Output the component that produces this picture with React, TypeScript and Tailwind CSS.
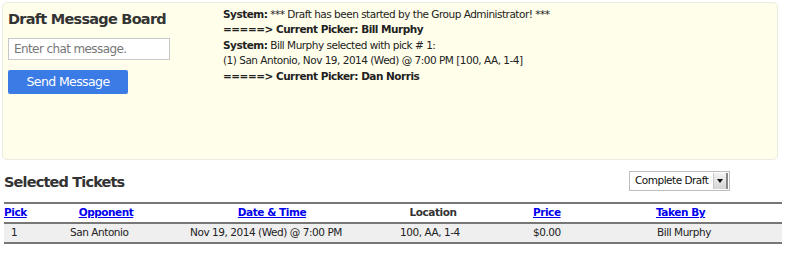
import React from "react";

const font = { fontFamily: '"DejaVu Sans", Verdana, sans-serif' };

export default function App() {
  return (
    <div className="w-[786px] h-[258px] bg-white text-[#222] overflow-hidden" style={font}>
      <div className="pt-[2px] pl-[2px]">
        <div className="w-[776px] h-[158px] bg-[#fffeea] border border-[#ebebdf] rounded-[5px] flex">
          <div className="w-[220px] pl-[5px] pt-[6px] flex flex-col">
            <div className="text-[14.5px] font-bold text-[#333] leading-[20px] tracking-[-0.75px]">Draft Message Board</div>
            <div className="mt-[9px] w-[162px] h-[22px] border border-[#c8c8c8] bg-white flex items-center pl-[5px] text-[12px] text-[#777] tracking-[-0.6px]">
              Enter chat message.
            </div>
            <div className="mt-[10px] w-[120px] h-[24px] bg-[#3b7be5] rounded-[2px] flex items-center justify-center text-white text-[12.5px] tracking-[-0.6px]">
              Send Message
            </div>
          </div>
          <div className="pt-[4px] text-[10.5px] leading-[15.4px] text-[#222] tracking-[-0.5px]">
            <div><b>System:</b> *** Draft has been started by the Group Administrator! ***</div>
            <div className="font-bold">=====&gt; Current Picker: Bill Murphy</div>
            <div><b>System:</b> Bill Murphy selected with pick # 1:</div>
            <div>(1) San Antonio, Nov 19, 2014 (Wed) @ 7:00 PM [100, AA, 1-4]</div>
            <div className="font-bold">=====&gt; Current Picker: Dan Norris</div>
          </div>
        </div>
      </div>
      <div className="flex items-center h-[42px] pl-[4px]">
        <div className="text-[14.5px] font-bold text-[#333] tracking-[-0.85px] mt-[4px]">Selected Tickets</div>
        <div className="ml-auto mr-[56px] w-[101px] h-[20px] border border-[#bdbdbd] bg-white flex items-center text-[10.5px] text-[#111] whitespace-nowrap">
          <span className="pl-[5px] flex-1 tracking-[-0.5px]">Complete Draft</span>
          <div className="w-[15px] h-[16px] mr-[1px] bg-gradient-to-b from-[#f4f4f4] to-[#d4d4d4] border-l border-[#c8c8c8] border-r-2 border-r-[#888] flex items-center justify-center">
            <div className="w-0 h-0 border-l-[3px] border-r-[3px] border-t-[4px] border-l-transparent border-r-transparent border-t-[#111]" />
          </div>
        </div>
      </div>
      <div className="ml-[4px] w-[778px] text-[10.5px] tracking-[-0.45px]">
        <div className="border-t-2 border-[#777] border-b-2 flex h-[22px] items-center font-bold">
          <div className="w-[36px] text-[#0000ee] underline">Pick</div>
          <div className="w-[132px] text-center text-[#0000ee] underline">Opponent</div>
          <div className="w-[200px] text-center text-[#0000ee] underline">Date &amp; Time</div>
          <div className="w-[122px] text-center text-[#333]">Location</div>
          <div className="w-[126px] pl-[39px] text-[#0000ee] underline">Price</div>
          <div className="flex-1 pl-[36px] text-[#0000ee] underline">Taken By</div>
        </div>
        <div className="flex h-[20px] items-center bg-[#efefef] border-b-2 border-[#777] text-[#222]">
          <div className="w-[36px] pl-[7px]">1</div>
          <div className="w-[132px] pl-[30px]">San Antonio</div>
          <div className="w-[200px] pl-[18px]">Nov 19, 2014 (Wed) @ 7:00 PM</div>
          <div className="w-[122px] pl-[28px]">100, AA, 1-4</div>
          <div className="w-[126px] pl-[39px]">$0.00</div>
          <div className="flex-1 pl-[37px]">Bill Murphy</div>
        </div>
      </div>
    </div>
  );
}
